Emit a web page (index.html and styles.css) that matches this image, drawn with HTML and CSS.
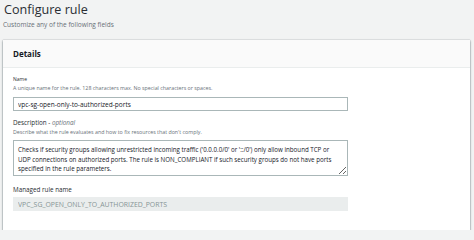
FILE: index.html
```html
<!DOCTYPE html>
<html lang="en">
<head>
<meta charset="utf-8">
<title>Configure rule</title>
<link rel="stylesheet" href="styles.css">
</head>
<body>
<div class="page">
  <header class="page-head">
    <h1 class="title">Configure rule</h1>
    <p class="subtitle">Customize any of the following fields</p>
  </header>
  <section class="card">
    <div class="card-head">
      <h2 class="card-title">Details</h2>
    </div>
    <div class="card-body">
      <div class="field field-name">
        <label class="label label-small" for="rule-name">Name</label>
        <p class="help">A unique name for the rule. 128 characters max. No special characters or spaces.</p>
        <input class="input" id="rule-name" type="text" value="vpc-sg-open-only-to-authorized-ports">
      </div>
      <div class="field field-desc">
        <label class="label" for="rule-desc">Description - <i>optional</i></label>
        <p class="help">Describe what the rule evaluates and how to fix resources that don't comply.</p>
        <textarea class="textarea" id="rule-desc">Checks if security groups allowing unrestricted incoming traffic ('0.0.0.0/0' or '::/0') only allow inbound TCP or UDP connections on authorized ports. The rule is NON_COMPLIANT if such security groups do not have ports specified in the rule parameters.</textarea>
      </div>
      <div class="field field-managed">
        <label class="label" for="managed-name">Managed rule name</label>
        <input class="input input-disabled" id="managed-name" type="text" value="VPC_SG_OPEN_ONLY_TO_AUTHORIZED_PORTS" disabled>
      </div>
    </div>
  </section>
</div>
</body>
</html>
```

FILE: styles.css
```css
html, body {
  margin: 0;
  padding: 0;
  background: #f2f3f3;
}

body {
  font-family: "Open Sans", "Noto Sans", sans-serif;
  color: #16191f;
}

.page {
  padding: 2px 4px 0 3px;
}

.page-head {
  display: flex;
  flex-direction: column;
}

.title {
  margin: 0 0 0 1px;
  font-size: 12.6px;
  line-height: 15px;
  font-weight: 400;
  color: #2a2e33;
}

.subtitle {
  margin: 3px 0 0 0;
  font-size: 6.5px;
  line-height: 9px;
  color: #687078;
}

.card {
  margin-top: 11px;
  background: #ffffff;
  box-shadow: 0 1px 2px rgba(0, 28, 36, 0.5), 0 0 1px rgba(0, 28, 36, 0.35);
}

.card-head {
  height: 27px;
  display: flex;
  align-items: center;
  padding: 0 10px;
  background: #fafafa;
  border-bottom: 1px solid #eaeded;
}

.card-title {
  margin: 0;
  font-size: 8px;
  line-height: 10px;
  font-weight: 700;
  color: #16191f;
}

.card-body {
  padding: 8px 10px 19px 10px;
  display: flex;
  flex-direction: column;
}

.field {
  display: flex;
  flex-direction: column;
  width: 335px;
}

.field-desc {
  margin-top: 8px;
}

.field-managed {
  margin-top: 10px;
}

.label {
  font-size: 6.3px;
  line-height: 7px;
  color: #2a2e33;
}

.label i {
  color: #687078;
}

.label-small {
  font-size: 5px;
}

.help {
  margin: 2px 0 0 0;
  font-size: 5.3px;
  line-height: 7px;
  color: #687078;
}

.field-desc .help {
  margin-top: 3px;
}

.field-name .input {
  margin-top: 5px;
}

.field-desc .textarea {
  margin-top: 4px;
}

.field-managed .input {
  margin-top: 4px;
}

.input {
  box-sizing: border-box;
  width: 335px;
  height: 14px;
  margin: 0;
  padding: 0 0 0 4px;
  border: 1px solid #aab7b8;
  border-radius: 0;
  background: #ffffff;
  font-family: "Open Sans", "Noto Sans", sans-serif;
  font-size: 6.5px;
  color: #16191f;
  outline: none;
}

.input-disabled {
  background: #eaeded;
  border-color: #eaeded;
  font-size: 6.9px;
  color: #879596;
  -webkit-text-fill-color: #879596;
  opacity: 1;
}

.textarea {
  box-sizing: border-box;
  width: 335px;
  height: 36px;
  margin: 0;
  padding: 4px 4px 0 4px;
  border: 1px solid #aab7b8;
  border-radius: 0;
  background: #ffffff;
  font-family: "Open Sans", "Noto Sans", sans-serif;
  font-size: 6.2px;
  line-height: 9.5px;
  color: #16191f;
  resize: vertical;
  overflow: hidden;
  outline: none;
}
```
